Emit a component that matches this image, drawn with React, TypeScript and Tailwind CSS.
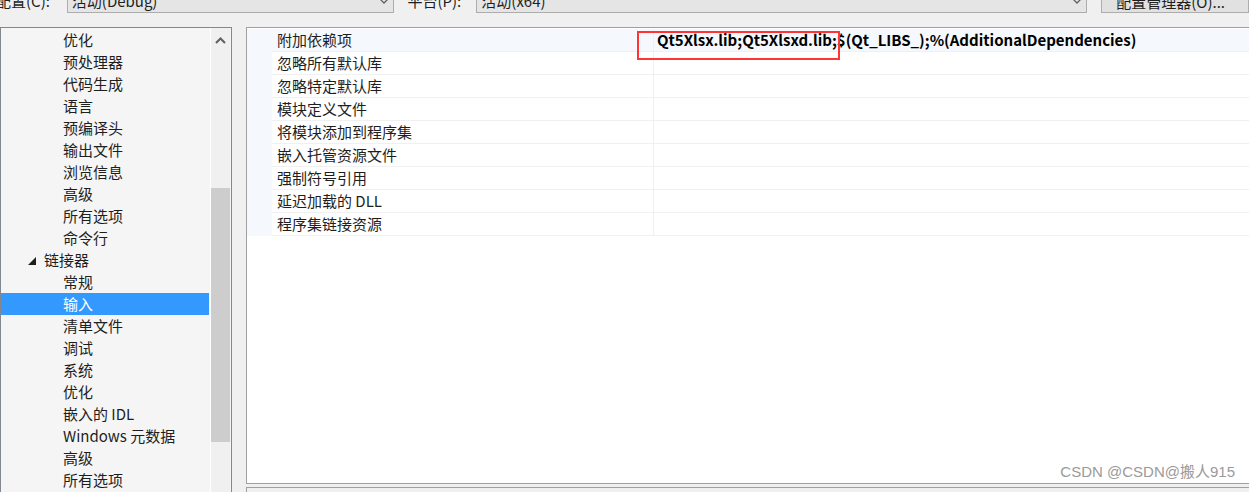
import React from 'react'

const TREE: { label: string; level: 0 | 1; expanded?: boolean; selected?: boolean }[] = [
  { label: '优化', level: 1 },
  { label: '预处理器', level: 1 },
  { label: '代码生成', level: 1 },
  { label: '语言', level: 1 },
  { label: '预编译头', level: 1 },
  { label: '输出文件', level: 1 },
  { label: '浏览信息', level: 1 },
  { label: '高级', level: 1 },
  { label: '所有选项', level: 1 },
  { label: '命令行', level: 1 },
  { label: '链接器', level: 0, expanded: true },
  { label: '常规', level: 1 },
  { label: '输入', level: 1, selected: true },
  { label: '清单文件', level: 1 },
  { label: '调试', level: 1 },
  { label: '系统', level: 1 },
  { label: '优化', level: 1 },
  { label: '嵌入的 IDL', level: 1 },
  { label: 'Windows 元数据', level: 1 },
  { label: '高级', level: 1 },
  { label: '所有选项', level: 1 },
]

const PROPS: { name: string; value?: string }[] = [
  { name: '附加依赖项', value: 'Qt5Xlsx.lib;Qt5Xlsxd.lib;$(Qt_LIBS_);%(AdditionalDependencies)' },
  { name: '忽略所有默认库' },
  { name: '忽略特定默认库' },
  { name: '模块定义文件' },
  { name: '将模块添加到程序集' },
  { name: '嵌入托管资源文件' },
  { name: '强制符号引用' },
  { name: '延迟加载的 DLL' },
  { name: '程序集链接资源' },
]

/* ─── small glyphs ─────────────────────────────────────────── */
function ChevronDown() {
  return (
    <svg width="10" height="6" viewBox="0 0 10 6" className="shrink-0">
      <path d="M1 1l4 4 4-4" fill="none" stroke="#606060" strokeWidth="1.3" />
    </svg>
  )
}

function ChevronUp() {
  return (
    <svg width="11" height="7" viewBox="0 0 11 7">
      <path d="M1 6l4.5-4.5L10 6" fill="none" stroke="#606060" strokeWidth="2" />
    </svg>
  )
}

function Expanded() {
  return (
    <svg width="8" height="8" viewBox="0 0 8 8" className="shrink-0">
      <polygon points="8,0 8,8 0,8" fill="#1e1e1e" />
    </svg>
  )
}

/* ─── top toolbar ──────────────────────────────────────────── */
function Combo({ text, className }: { text: string; className: string }) {
  return (
    <div
      className={`-mt-[11px] flex h-[24px] items-center justify-between border border-[#adadad] bg-[#e5e5e5] pl-[4px] pr-[4px] ${className}`}
    >
      <span className="leading-[24px]">{text}</span>
      <ChevronDown />
    </div>
  )
}

function Toolbar() {
  return (
    <div className="flex h-[27px] shrink-0 items-start text-[15px] text-[#1e1e1e]">
      <span className="-ml-[4px] -mt-[11px] w-[72px] leading-[24px]">配置(C):</span>
      <Combo text="活动(Debug)" className="w-[333px]" />
      <span className="-mt-[11px] ml-[13px] w-[70px] leading-[24px]">平台(P):</span>
      <Combo text="活动(x64)" className="w-[621px]" />
      <div className="-mt-[11px] ml-[14px] h-[24px] w-[150px] border border-[#adadad] bg-[#e1e1e1] pl-[14px] leading-[24px]">
        配置管理器(O)...
      </div>
    </div>
  )
}

/* ─── left tree ────────────────────────────────────────────── */
function Tree() {
  return (
    <div className="flex h-full w-[232px] shrink-0 border-l border-r border-t border-[#828790] bg-[#f5f5f5]">
      <div className="w-[208px] shrink-0 pt-[1px]">
        {TREE.map((n, i) => (
          <div
            key={i}
            className={`flex h-[22px] items-center text-[15px] ${
              n.selected ? 'bg-[#3399ff] text-white' : 'text-[#1e1e1e]'
            } ${n.level === 0 ? 'pl-[27px]' : 'pl-[62px]'}`}
          >
            {n.level === 0 && (
              <span className="mr-[8px] flex h-[22px] items-center pt-[2px]">
                <Expanded />
              </span>
            )}
            <span className="whitespace-nowrap">{n.label}</span>
          </div>
        ))}
      </div>
      <div className="ml-[1px] flex w-[20px] shrink-0 flex-col border-l border-white bg-[#f0f0f0]">
        <div className="flex h-[24px] items-center justify-center">
          <ChevronUp />
        </div>
        <div className="mt-[136px] h-[254px] w-full bg-[#cdcdcd]" />
      </div>
    </div>
  )
}

/* ─── right property grid ──────────────────────────────────── */
function PropertyGrid() {
  return (
    <div className="flex min-w-0 flex-1 flex-col">
      <div className="h-[457px] shrink-0 border border-r-0 border-[#a0a0a0] bg-white pt-[1px]">
        {PROPS.map((p, i) => (
          <div key={i} className={`flex h-[23px] ${i === 0 ? 'bg-[#f5f8fc]' : ''}`}>
            <div className="w-[25px] shrink-0 bg-[#f5f8fc]" />
            <div className="flex w-[381px] shrink-0 items-center border-b border-[#f0f0f0] pl-[5px] text-[15px] text-[#1e1e1e]">
              {p.name}
            </div>
            <div className="flex flex-1 items-center whitespace-nowrap border-b border-l border-[#f0f0f0] pl-[3px] text-[15px] font-bold text-black">
              {p.value}
            </div>
          </div>
        ))}
      </div>
      <div className="mt-[3px] flex-1 border-l border-t border-[#a0a0a0] bg-[#f0f0f0]" />
    </div>
  )
}

export default function App() {
  return (
    <div
      className="relative flex h-[492px] w-[1249px] flex-col overflow-hidden bg-[#f0f0f0]"
      style={{ fontFamily: '"Noto Sans CJK SC", "Noto Sans", sans-serif' }}
    >
      <Toolbar />
      <div className="flex min-h-0 flex-1 gap-[14px]">
        <Tree />
        <PropertyGrid />
      </div>

      {/* annotation box */}
      <div className="absolute left-[637px] top-[31px] h-[29px] w-[203px] border-[2.5px] border-[#ff3535]" />

      {/* watermark */}
      <div
        className="absolute bottom-[9px] right-[14px] text-[15px] text-[#9a9a9a]"
        style={{ fontFamily: '"Liberation Sans", "Noto Sans CJK SC", sans-serif' }}
      >
        CSDN @CSDN@搬人915
      </div>
    </div>
  )
}
